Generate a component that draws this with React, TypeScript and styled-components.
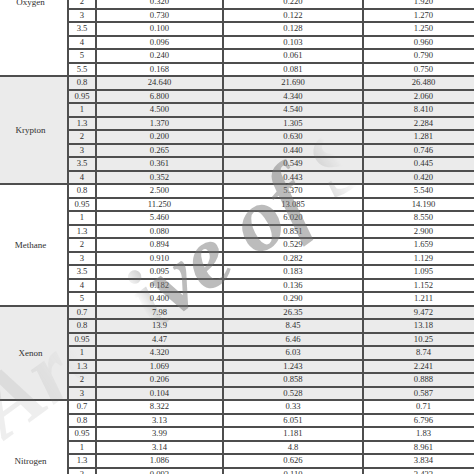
import styled, { createGlobalStyle } from "styled-components";

interface IGroup {
  name: string;
  shaded: boolean;
  rows: string[][];
}

const groups: IGroup[] = [
  {
    name: "Oxygen",
    shaded: false,
    rows: [
      ["0.7", "9.140", "7.260", "10.320"],
      ["0.8", "6.420", "5.180", "8.750"],
      ["0.95", "2.310", "1.940", "4.060"],
      ["1", "1.850", "1.120", "3.240"],
      ["1.3", "0.940", "0.560", "2.180"],
      ["2", "0.320", "0.220", "1.920"],
      ["3", "0.730", "0.122", "1.270"],
      ["3.5", "0.100", "0.128", "1.250"],
      ["4", "0.096", "0.103", "0.960"],
      ["5", "0.240", "0.061", "0.790"],
      ["5.5", "0.168", "0.081", "0.750"],
    ],
  },
  {
    name: "Krypton",
    shaded: true,
    rows: [
      ["0.8", "24.640", "21.690", "26.480"],
      ["0.95", "6.800", "4.340", "2.060"],
      ["1", "4.500", "4.540", "8.410"],
      ["1.3", "1.370", "1.305", "2.284"],
      ["2", "0.200", "0.630", "1.281"],
      ["3", "0.265", "0.440", "0.746"],
      ["3.5", "0.361", "0.549", "0.445"],
      ["4", "0.352", "0.443", "0.420"],
    ],
  },
  {
    name: "Methane",
    shaded: false,
    rows: [
      ["0.8", "2.500", "5.370", "5.540"],
      ["0.95", "11.250", "13.085", "14.190"],
      ["1", "5.460", "6.020", "8.550"],
      ["1.3", "0.080", "0.851", "2.900"],
      ["2", "0.894", "0.529", "1.659"],
      ["3", "0.910", "0.282", "1.129"],
      ["3.5", "0.095", "0.183", "1.095"],
      ["4", "0.182", "0.136", "1.152"],
      ["5", "0.400", "0.290", "1.211"],
    ],
  },
  {
    name: "Xenon",
    shaded: true,
    rows: [
      ["0.7", "7.98", "26.35", "9.472"],
      ["0.8", "13.9", "8.45", "13.18"],
      ["0.95", "4.47", "6.46", "10.25"],
      ["1", "4.320", "6.03", "8.74"],
      ["1.3", "1.069", "1.243", "2.241"],
      ["2", "0.206", "0.858", "0.888"],
      ["3", "0.104", "0.528", "0.587"],
    ],
  },
  {
    name: "Nitrogen",
    shaded: false,
    rows: [
      ["0.7", "8.322", "0.33", "0.71"],
      ["0.8", "3.13", "6.051", "6.796"],
      ["0.95", "3.99", "1.181", "1.83"],
      ["1", "3.14", "4.8", "8.961"],
      ["1.3", "1.086", "0.626", "3.834"],
      ["2", "0.093", "0.110", "3.433"],
      ["3", "0.071", "0.094", "2.760"],
      ["3.5", "0.058", "0.087", "2.210"],
      ["4", "0.049", "0.072", "1.940"],
    ],
  },
];

const App = () => {
  return (
    <>
      <GlobalStyle />
      <Page>
        <Sheet>
          {groups.map((g) => (
            <Group key={g.name} $shaded={g.shaded}>
              <GasName>{g.name}</GasName>
              <Rows>
                {g.rows.map((r, i) => (
                  <DataRow key={i}>
                    {r.map((v, j) => (
                      <Cell key={j}>{v}</Cell>
                    ))}
                  </DataRow>
                ))}
              </Rows>
            </Group>
          ))}
        </Sheet>
        <Watermark>Archive of SID</Watermark>
      </Page>
    </>
  );
};

export default App;

const line = "#4e4e4e";

const GlobalStyle = createGlobalStyle`
  html, body {
    margin: 0;
    padding: 0;
    background: #fff;
  }
  body {
    width: 474px;
    height: 474px;
    overflow: hidden;
  }
`;

const Page = styled.div`
  position: relative;
  width: 474px;
  height: 474px;
  overflow: hidden;
  background: #fff;
  font-family: "Liberation Serif", "Times New Roman", serif;
`;

const Sheet = styled.div`
  width: 489px;
  margin: -73.5px 0 0 -6px;
  color: #303030;
  font-size: 8.6px;
  border-top: 2px solid ${line};
`;

const Group = styled.div<{ $shaded: boolean }>`
  display: grid;
  grid-template-columns: 75px 1fr;
  background: ${({ $shaded }) => ($shaded ? "#ebebeb" : "#fff")};
  border-bottom: 2px solid ${line};
`;

const GasName = styled.div`
  display: flex;
  align-items: center;
  justify-content: center;
  font-size: 9px;
  border-right: 2px solid ${line};
`;

const Rows = styled.div`
  display: flex;
  flex-direction: column;
`;

const DataRow = styled.div`
  display: grid;
  grid-template-columns: 26px 127px 140px 1fr;
  height: 11.5px;
  & + & {
    border-top: 2px solid ${line};
  }
`;

const Cell = styled.div`
  display: flex;
  align-items: center;
  justify-content: center;
  white-space: nowrap;
  line-height: 1;
  & + & {
    border-left: 2px solid ${line};
  }
`;

const Watermark = styled.span`
  position: absolute;
  left: 212px;
  top: 252px;
  transform: translate(-50%, -50%) rotate(-36deg);
  font-size: 90px;
  font-weight: 700;
  font-style: italic;
  white-space: nowrap;
  color: rgba(115, 115, 115, 0.48);
  pointer-events: none;
  -webkit-mask-image: linear-gradient(
    90deg,
    rgba(0, 0, 0, 0.25) 10%,
    transparent 20%,
    transparent 34%,
    #000 39%,
    #000 68%,
    transparent 78%
  );
  mask-image: linear-gradient(
    90deg,
    rgba(0, 0, 0, 0.25) 10%,
    transparent 20%,
    transparent 34%,
    #000 39%,
    #000 68%,
    transparent 78%
  );
`;
